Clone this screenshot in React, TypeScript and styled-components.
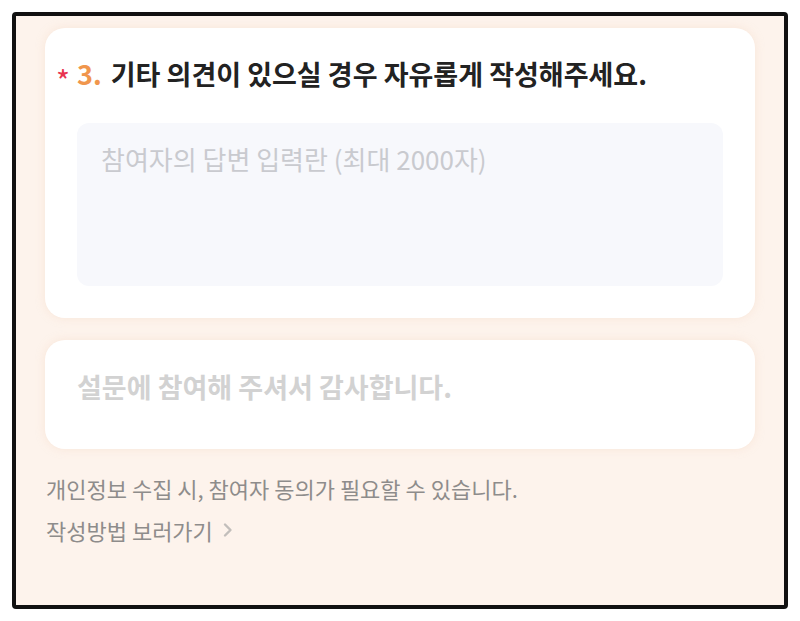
import React from "react";
import styled, { createGlobalStyle } from "styled-components";

const GlobalStyle = createGlobalStyle`
  html, body {
    margin: 0;
    padding: 0;
    background: #ffffff;
  }
  body {
    font-family: "Noto Sans CJK KR", "Noto Sans", sans-serif;
  }
`;

const Frame = styled.div`
  box-sizing: border-box;
  margin: 12px 12px 0;
  height: 597px;
  border: 4px solid #111111;
  border-radius: 4px;
  background: #fdf3ec;
  padding: 12px 29px 0;
  display: flex;
  flex-direction: column;
  gap: 22px;
  overflow: hidden;
`;

const Card = styled.section<{ $height: number }>`
  box-sizing: border-box;
  height: ${({ $height }) => $height}px;
  background: #ffffff;
  border-radius: 20px;
  box-shadow: 0 0 10px rgba(240, 205, 180, 0.35);
  padding: 0 32px;
  display: flex;
  flex-direction: column;
`;

const QuestionTitle = styled.h2`
  margin: 28px 0 0 -21px;
  font-size: 27px;
  font-weight: 700;
  line-height: 36px;
  color: #222222;
  white-space: nowrap;
`;

const Required = styled.span`
  color: #e8344f;
  font-size: 30px;
  font-weight: 400;
  line-height: 0;
  margin-right: 7px;
  vertical-align: -8px;
`;

const Number = styled.span`
  color: #f0964c;
  margin-right: 9px;
`;

const AnswerBox = styled.textarea`
  box-sizing: border-box;
  margin-top: 31px;
  width: 100%;
  height: 163px;
  border: none;
  outline: none;
  resize: none;
  border-radius: 12px;
  background: #f7f8fc;
  padding: 19px 24px;
  font-family: inherit;
  font-size: 26px;
  line-height: 34px;
  color: #333;

  &::placeholder {
    color: #c9cacf;
  }
`;

const ThanksText = styled.p`
  margin: 28px 0 0;
  font-size: 27px;
  font-weight: 700;
  line-height: 38px;
  color: #d2d2d2;
`;

const Notice = styled.div`
  margin-top: 0;
  padding-left: 1px;
  display: flex;
  flex-direction: column;
  gap: 8px;
`;

const NoticeLine = styled.p`
  margin: 0;
  font-size: 22px;
  line-height: 34px;
  color: #8e8c8b;
`;

const GuideLink = styled.a`
  display: inline-flex;
  align-items: center;
  gap: 9px;
  font-size: 22px;
  line-height: 34px;
  color: #8e8c8b;
  text-decoration: none;
  cursor: pointer;
`;

const Chevron = () => (
  <svg width="12" height="16" viewBox="0 0 12 16" fill="none">
    <path d="M3 2.5 L8.5 8 L3 13.5" stroke="#c2bebb" strokeWidth="2.4" strokeLinecap="round" strokeLinejoin="round" />
  </svg>
);

export default function App() {
  return (
    <>
      <GlobalStyle />
      <Frame>
        <Card $height={290}>
          <QuestionTitle>
            <Required>*</Required>
            <Number>3.</Number>
            기타 의견이 있으실 경우 자유롭게 작성해주세요.
          </QuestionTitle>
          <AnswerBox placeholder="참여자의 답변 입력란 (최대 2000자)" />
        </Card>
        <Card $height={109}>
          <ThanksText>설문에 참여해 주셔서 감사합니다.</ThanksText>
        </Card>
        <Notice>
          <NoticeLine>개인정보 수집 시, 참여자 동의가 필요할 수 있습니다.</NoticeLine>
          <div>
            <GuideLink>
              작성방법 보러가기
              <Chevron />
            </GuideLink>
          </div>
        </Notice>
      </Frame>
    </>
  );
}
